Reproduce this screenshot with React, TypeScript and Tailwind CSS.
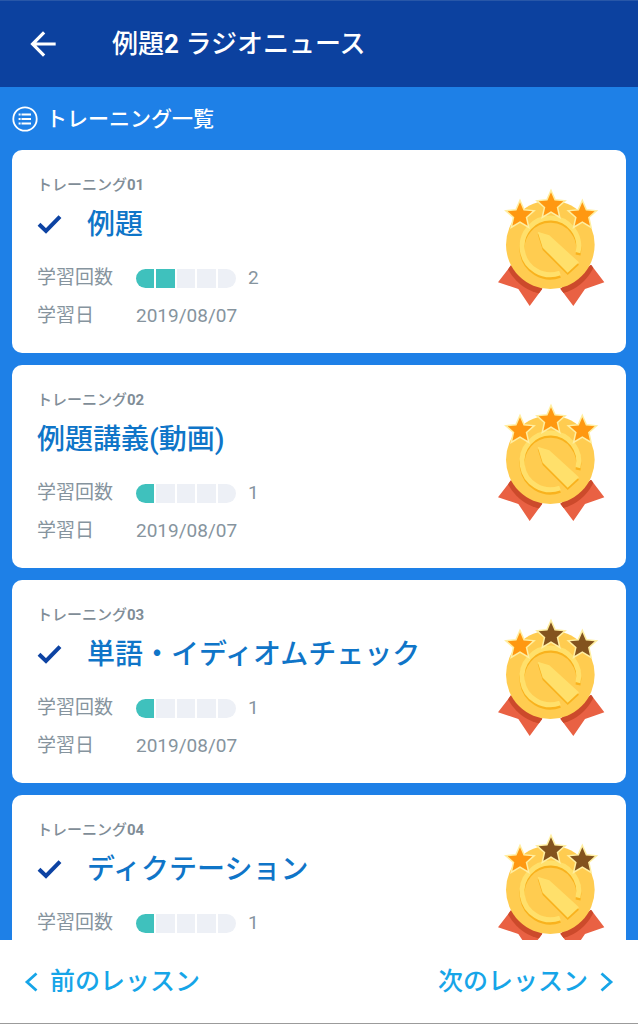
import React from 'react';
import { MdArrowBack } from 'react-icons/md';

type Training = {
  no: string;
  title: string;
  done: boolean;
  count: number;
  date?: string;
  stars: number;
};

const MAX_COUNT = 5;

const trainings: Training[] = [
  { no: "01", title: "例題", done: true, count: 2, date: "2019/08/07", stars: 3 },
  { no: "02", title: "例題講義(動画)", done: false, count: 1, date: "2019/08/07", stars: 3 },
  { no: "03", title: "単語・イディオムチェック", done: true, count: 1, date: "2019/08/07", stars: 1 },
  { no: "04", title: "ディクテーション", done: true, count: 1, stars: 1 },
];

const starCenters = [[120, 106], [213, 76], [307, 106]];

function starPoints(cx: number, cy: number) {
  return Array.from({ length: 10 }, (_, i) => {
    const r = i % 2 === 0 ? 39 : 18;
    const a = (Math.PI / 5) * i - Math.PI / 2;
    return `${(cx + r * Math.cos(a)).toFixed(1)},${(cy + r * Math.sin(a)).toFixed(1)}`;
  }).join(" ");
}

function Medal({ id, stars }: { id: string; stars: number }) {
  const ring = "M294 218 A85 85 0 1 0 240 279";
  const pen = "173,155 208,166 297,247 263,278 188,203";
  const ribbons = "M54 307 L93 256 L187 326 L149 378 L115 327 Z M373 307 L333 254 L241 326 L280 378 L315 327 Z";

  return (
    <svg viewBox="48 24 330 360" className="w-[110px] h-[120px] shrink-0" role="img" aria-label={`スター${stars}個`}>
      <clipPath id={`ribbon-${id}`}><path d={ribbons} /></clipPath>
      <path d={ribbons} fill="#e96143" />
      <circle cx="211" cy="202" r="143" fill="#cc4a2b" clipPath={`url(#ribbon-${id})`} />
      <circle cx="211" cy="194" r="133" fill="#ffcc50" />
      <g transform="translate(0 7)">
        <path d={ring} fill="none" stroke="#f9b21d" strokeWidth="15" />
        <polygon points={pen} fill="#f9b21d" />
      </g>
      <path d={ring} fill="none" stroke="#ffe06b" strokeWidth="15" />
      <polygon points={pen} fill="#ffe06b" />
      {starCenters.map(([cx, cy], i) => (
        <polygon
          key={cx}
          points={starPoints(cx, cy)}
          fill={i < stars ? "#ff9811" : "#83531e"}
          stroke="#ffeea0"
          strokeWidth="9"
          strokeMiterlimit="6"
          paintOrder="stroke"
        />
      ))}
    </svg>
  );
}

function CountBar({ count }: { count: number }) {
  return (
    <div role="meter" aria-label="学習回数" aria-valuemin={0} aria-valuemax={MAX_COUNT} aria-valuenow={count} className="flex gap-0.5 w-[100px] h-[19px] rounded-full overflow-hidden">
      {Array.from({ length: MAX_COUNT }, (_, i) => (
        <span key={i} className={`flex-1 ${i < count ? 'bg-[#3fc1bd]' : 'bg-[#edf0f6]'}`} />
      ))}
    </div>
  );
}

function TrainingCard({ item }: { item: Training }) {
  return (
    <li className="flex items-start bg-white rounded-[10px] pl-[25px] pr-5 pt-[25px] pb-[18px]">
      <div className="flex-1 min-w-0">
        <p className="text-[15px] leading-5 font-medium text-[#7f8d97]">トレーニング<b className="font-bold">{item.no}</b></p>
        <h2 className="mt-2.5 flex items-center text-[28px] leading-10 font-medium text-[#0f75c8]">
          {item.done && (
            <svg viewBox="0 0 25 20" className="w-[25px] h-5 mr-[25px] shrink-0" role="img" aria-label="完了">
              <path d="M2 9.2 L9 16 L23 1.6" fill="none" stroke="#0d43a3" strokeWidth="4" />
            </svg>
          )}
          {item.title}
        </h2>
        <dl className="mt-3.5 text-[19px] leading-[38px] text-[#86949e]">
          <div className="flex">
            <dt className="w-[99px]">学習回数</dt>
            <dd className="flex items-center gap-3">
              <CountBar count={item.count} />
              {item.count}
            </dd>
          </div>
          {item.date && (
            <div className="flex">
              <dt className="w-[99px]">学習日</dt>
              <dd>{item.date}</dd>
            </div>
          )}
        </dl>
      </div>
      <div className="mt-[13px]">
        <Medal id={item.no} stars={item.stars} />
      </div>
    </li>
  );
}

export default function App() {
  return (
    <div className="h-screen flex flex-col bg-[#1e80e7] font-[Roboto,'Noto_Sans_CJK_JP',sans-serif]">
      {/* HEADER */}
      <header className="h-[87px] shrink-0 flex items-center bg-[#0c419f] border-t border-[#2857a8] text-white pl-6">
        <button aria-label="戻る" className="mr-[50px]">
          <MdArrowBack size={38} />
        </button>
        <h1 className="text-[26px] leading-10 font-medium">例題<b className="font-bold">2</b> ラジオニュース</h1>
      </header>

      {/* TRAINING LIST */}
      <main className="flex-1 min-h-0 overflow-y-auto [scrollbar-width:none] px-3">
        <div className="h-[63px] flex items-center gap-2 text-white">
          <svg viewBox="0 0 26 26" className="w-[26px] h-[26px] shrink-0" fill="none" stroke="currentColor" aria-hidden="true">
            <circle cx="13" cy="13" r="11.7" strokeWidth="1.8" />
            <path d="M9.5 8.6 H19 M9.5 13 H19 M9.5 17.4 H19" strokeWidth="2" />
            <path d="M6.6 8.6 H8.6 M6.6 13 H8.6 M6.6 17.4 H8.6" strokeWidth="2" />
          </svg>
          <h2 className="text-[21px] leading-8 font-medium">トレーニング一覧</h2>
        </div>
        <ul className="flex flex-col gap-3 pb-3">
          {trainings.map((item) => (
            <TrainingCard key={item.no} item={item} />
          ))}
        </ul>
      </main>

      {/* LESSON NAVIGATION */}
      <footer className="h-[84px] shrink-0 flex items-center justify-between bg-white border-b border-[#9b9b9b] px-6 text-[25px] leading-10 font-medium text-[#16a5e8]">
        <button className="flex items-center gap-3">
          <svg viewBox="0 0 14 20" className="w-3.5 h-5" fill="none" stroke="currentColor" strokeWidth="2.8" aria-hidden="true">
            <path d="M12.5 1.5 L3 10 L12.5 18.5" />
          </svg>
          前のレッスン
        </button>
        <button className="flex items-center gap-3">
          次のレッスン
          <svg viewBox="0 0 14 20" className="w-3.5 h-5" fill="none" stroke="currentColor" strokeWidth="2.8" aria-hidden="true">
            <path d="M1.5 1.5 L11 10 L1.5 18.5" />
          </svg>
        </button>
      </footer>
    </div>
  );
}
